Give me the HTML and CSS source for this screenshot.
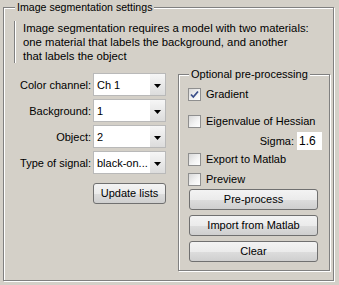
FILE: index.html
```html
<!DOCTYPE html>
<html>
<head>
<meta charset="utf-8">
<link rel="stylesheet" href="styles.css">
</head>
<body>
<div class="page">
  <fieldset class="group outer">
    <legend class="title">Image segmentation settings</legend>
    <div class="info">Image segmentation requires a model with two materials:<br>one material that labels the background, and another<br>that labels the object</div>
    <div class="main">
      <div class="left">
        <div class="form">
          <span class="lbl">Color channel:</span>
          <div class="popup"><span class="val">Ch 1</span><span class="arrow"><svg width="7" height="4" viewBox="0 0 7 4"><path d="M0 0H7L3.5 4Z" fill="#000"/></svg></span></div>
          <span class="lbl">Background:</span>
          <div class="popup"><span class="val">1</span><span class="arrow"><svg width="7" height="4" viewBox="0 0 7 4"><path d="M0 0H7L3.5 4Z" fill="#000"/></svg></span></div>
          <span class="lbl">Object:</span>
          <div class="popup"><span class="val">2</span><span class="arrow"><svg width="7" height="4" viewBox="0 0 7 4"><path d="M0 0H7L3.5 4Z" fill="#000"/></svg></span></div>
          <span class="lbl">Type of signal:</span>
          <div class="popup"><span class="val">black-on...</span><span class="arrow"><svg width="7" height="4" viewBox="0 0 7 4"><path d="M0 0H7L3.5 4Z" fill="#000"/></svg></span></div>
        </div>
        <div class="btn update">Update lists</div>
      </div>
      <fieldset class="group inner">
        <legend class="title">Optional pre-processing</legend>
        <div class="chk first"><span class="box"><svg width="11" height="11" viewBox="0 0 11 11"><path d="M2 5.5L4.3 8L9 2.5" fill="none" stroke="#3b4f8a" stroke-width="1.8"/></svg></span><span>Gradient</span></div>
        <div class="chk eig"><span class="box"></span><span>Eigenvalue of Hessian</span></div>
        <div class="sigma"><span>Sigma:</span><span class="edit">1.6</span></div>
        <div class="chk"><span class="box"></span><span>Export to Matlab</span></div>
        <div class="chk prev"><span class="box"></span><span>Preview</span></div>
        <div class="btn wide pre">Pre-process</div>
        <div class="btn wide">Import from Matlab</div>
        <div class="btn wide">Clear</div>
      </fieldset>
    </div>
  </fieldset>
</div>
</body>
</html>
```
FILE: styles.css
```css
html, body {
  margin: 0;
  padding: 0;
  background: #d4d0c8;
}
body {
  font-family: "Liberation Sans", Arial, sans-serif;
  font-size: 11px;
  color: #000;
  width: 339px;
  height: 285px;
  overflow: hidden;
}
.page {
  padding-left: 3px;
}
.group {
  margin: 0;
  padding: 0;
  border: 1px solid #808080;
  box-shadow: inset 1px 1px 0 #fff, 1px 1px 0 #fff;
  box-sizing: border-box;
  min-width: 0;
}
.title {
  padding: 0 2px;
  line-height: 14px;
  height: 14px;
  background: #d4d0c8;
  white-space: nowrap;
}
.outer {
  width: 331px;
  padding-bottom: 9px;
}
.outer > .title {
  margin-left: 11px;
  font-size: 10.6px;
}
.info {
  margin: 7px 0 0 10px;
  border-left: 1px solid #808080;
  box-shadow: inset 1px 0 0 #fff;
  padding-left: 8px;
  line-height: 14px;
  height: 42px;
  white-space: nowrap;
  font-size: 11.3px;
}
.main {
  display: flex;
  margin-top: 4px;
}
.left {
  margin-left: 10px;
  padding-top: 6px;
  width: 153px;
}
.form {
  display: grid;
  grid-template-columns: 77px 73px;
  column-gap: 2px;
  row-gap: 3px;
}
.lbl {
  text-align: right;
  line-height: 23px;
  height: 23px;
  padding-top: 1px;
  box-sizing: border-box;
  white-space: nowrap;
}
.popup {
  height: 23px;
  background: #fff;
  border: 1px solid #b9b9b9;
  box-sizing: border-box;
  display: flex;
}
.popup .val {
  flex: 1;
  padding-left: 3px;
  padding-top: 2px;
  line-height: 18px;
  white-space: nowrap;
  overflow: hidden;
}
.popup .arrow {
  width: 15px;
  background: linear-gradient(#f6f6f6, #dcdcdc);
  display: flex;
  align-items: center;
  justify-content: center;
  padding-top: 2px;
  box-sizing: border-box;
}
.btn {
  height: 21px;
  line-height: 19px;
  border: 1px solid #707070;
  border-radius: 3px;
  background: linear-gradient(#f3f3f3 0%, #ebebeb 50%, #dddddd 51%, #cfcfcf 100%);
  box-sizing: border-box;
  text-align: center;
  white-space: nowrap;
}
.update {
  margin-top: 9px;
  margin-left: 79px;
  width: 73px;
}
.inner {
  margin-left: 11px;
  width: 152px;
  padding: 0 11px 8px 9px;
}
.inner > .title {
  margin-left: 1px;
}
.chk {
  display: flex;
  align-items: center;
  height: 18px;
  white-space: nowrap;
}
.chk.first {
  margin-top: 4px;
}
.chk.eig {
  margin-top: 9px;
}
.chk.prev {
  margin-top: 2px;
}
.box {
  width: 13px;
  height: 13px;
  box-sizing: border-box;
  border: 1px solid #8f8f8f;
  background: linear-gradient(135deg, #d9d9d9 0%, #f4f4f4 60%, #ffffff 100%);
  margin-right: 5px;
  display: flex;
  align-items: center;
  justify-content: center;
  flex: none;
}
.sigma {
  display: flex;
  justify-content: flex-end;
  align-items: center;
  height: 18px;
  margin-top: 2px;
  margin-right: -4px;
}
.sigma .edit {
  width: 25px;
  height: 18px;
  line-height: 18px;
  background: #fff;
  margin-left: 3px;
  padding-left: 2px;
  box-sizing: border-box;
  font-size: 12px;
}
.wide {
  width: 129px;
  margin-left: 1px;
  margin-top: 5px;
}
.wide.pre {
  margin-top: 1px;
}
```
